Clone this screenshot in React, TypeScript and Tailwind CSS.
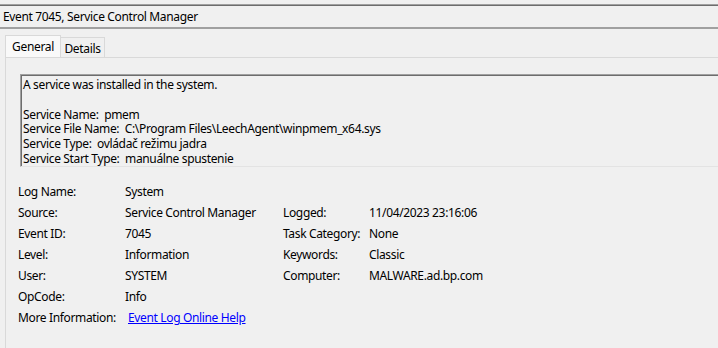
import React from "react";

const font = { fontFamily: '"Noto Sans", "Open Sans", sans-serif' };

function Row({ l1, v1, l2, v2, link }: { l1: string; v1: string; l2?: string; v2?: string; link?: boolean }) {
  return (
    <div className="flex h-[21px] items-center whitespace-nowrap">
      <div className="w-[107px] shrink-0">{l1}</div>
      <div className="w-[158px] shrink-0">
        {link ? (
          <span className="ml-[3px] text-[#0000ff] underline">{v1}</span>
        ) : (
          v1
        )}
      </div>
      <div className="w-[86px] shrink-0">{l2}</div>
      <div className="shrink-0">{v2}</div>
    </div>
  );
}

export default function App() {
  return (
    <div
      className="w-[718px] h-[348px] overflow-hidden bg-[#f0f0f0] text-[12px] text-black leading-[15px] tracking-[-0.35px]"
      style={font}
    >
      <div className="h-[4px]" />
      <div className="h-[1px] bg-[#a0a0a0]" />
      <div className="h-[1px] bg-[#6d6d6d]" />
      <div className="h-[21px] flex items-center pl-[3px]">Event 7045, Service Control Manager</div>
      <div className="h-[2px] bg-[#a0a0a0]" />
      <div className="h-[6px]" />
      {/* Tabs */}
      <div className="flex items-end pl-[5px] h-[22px]">
        <div className="h-[22px] w-[56px] border border-b-0 border-[#d9d9d9] bg-[#f9f9f9] flex items-center justify-center relative z-10">
          General
        </div>
        <div className="h-[20px] w-[44px] border border-l-0 border-b-0 border-[#d9d9d9] bg-[#f0f0f0] flex items-center justify-center pt-[2px]">
          Details
        </div>
      </div>
      {/* Pane */}
      <div className="ml-[5px] border-l border-t border-[#d9d9d9] h-[300px] w-[800px]">
        <div className="pl-[14px] pt-[16px]">
          <div className="h-[93px] w-[800px] border-t border-l border-[#a0a0a0] border-b border-b-[#e3e3e3]">
            <div className="h-full border-t border-l border-[#6d6d6d] pl-[1px] pt-[2px] overflow-hidden whitespace-pre leading-[14.8px]">
              <div>A service was installed in the system.</div>
              <div>&nbsp;</div>
              <div>Service Name:  pmem</div>
              <div>Service File Name:  C:\Program Files\LeechAgent\winpmem_x64.sys</div>
              <div>Service Type:  ovládač režimu jadra</div>
              <div>Service Start Type:  manuálne spustenie</div>
            </div>
          </div>
        </div>
        <div className="pl-[12px] pt-[14px]">
          <Row l1="Log Name:" v1="System" />
          <Row l1="Source:" v1="Service Control Manager" l2="Logged:" v2="11/04/2023 23:16:06" />
          <Row l1="Event ID:" v1="7045" l2="Task Category:" v2="None" />
          <Row l1="Level:" v1="Information" l2="Keywords:" v2="Classic" />
          <Row l1="User:" v1="SYSTEM" l2="Computer:" v2="MALWARE.ad.bp.com" />
          <Row l1="OpCode:" v1="Info" />
          <Row l1="More Information:" v1="Event Log Online Help" link />
        </div>
      </div>
    </div>
  );
}
